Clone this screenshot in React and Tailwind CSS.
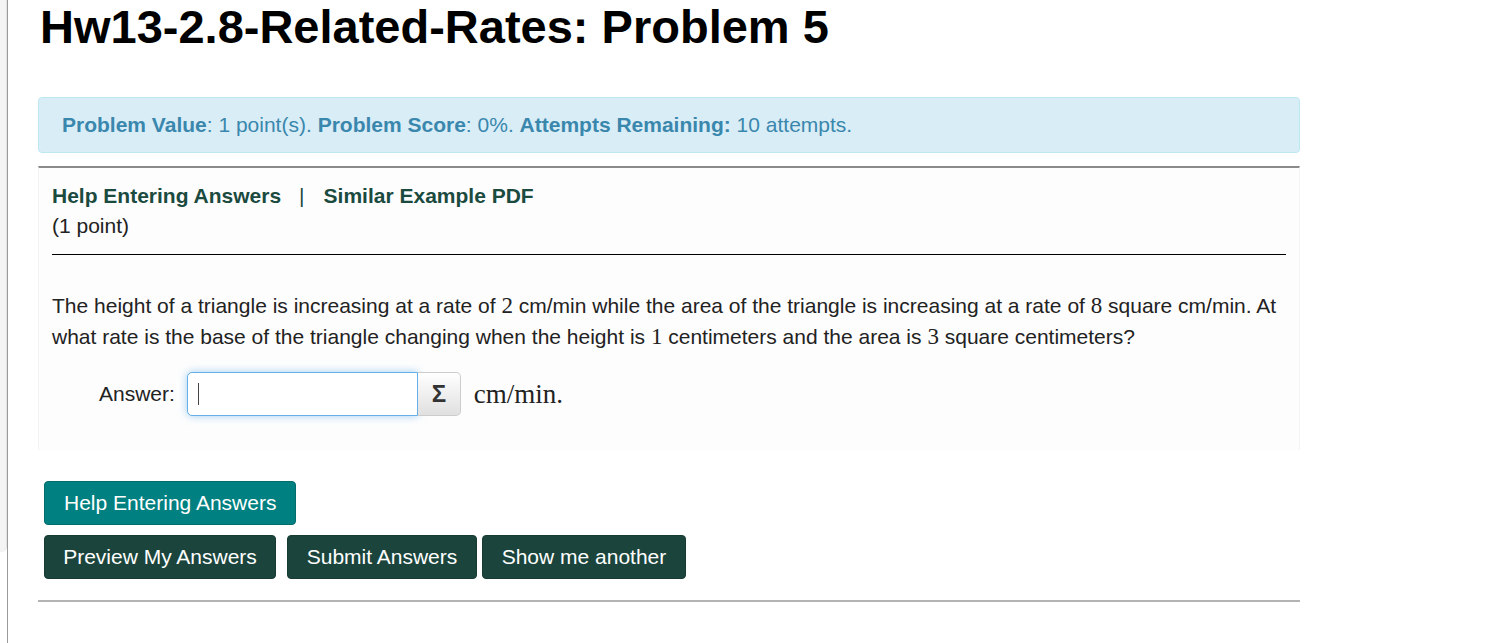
import React from "react";

const sans = { fontFamily: '"Liberation Sans", Arial, sans-serif' };
const serif = { fontFamily: '"Liberation Serif", "Times New Roman", serif' };

const M = ({ children }) => (
  <span className="text-[23px]" style={serif}>
    {children}
  </span>
);

const App = () => {
  return (
    <div className="flex min-h-[643px] w-[1503px] bg-white text-[#222]" style={sans}>
      {/* left sidebar edge */}
      <div className="w-[8px] shrink-0 border-r border-[#9a9a9a]">
        <div className="h-[552px] bg-[#f4f4f4] border-r border-[#e2e2e2] rounded-br-md"></div>
      </div>

      <div className="w-[1262px] ml-[30px]">
        <h1 className="ml-[2px] text-[47px] font-bold leading-[53px] text-black">
          Hw13-2.8-Related-Rates: Problem 5
        </h1>

        <div className="mt-[44px] h-[56px] flex items-center px-[23px] bg-[#d9edf7] border border-[#bce8f1] rounded-[4px] text-[21px] text-[#3a87ad]">
          <span>
            <b>Problem Value</b>: 1 point(s). <b>Problem Score</b>: 0%. <b>Attempts Remaining:</b> 10 attempts.
          </span>
        </div>

        <div className="mt-[13px] border-t-2 border-t-[#8a8a8a] border-x border-x-[#f3f3f3] bg-[#fdfdfd] h-[284px] px-[13px] pt-[13px]">
          <div className="text-[21px] leading-[30px]">
            <div className="font-bold text-[#1b4a3f]">
              <span>Help Entering Answers</span>
              <span className="ml-[18px] mr-[19px] font-normal">|</span>
              <span>Similar Example PDF</span>
            </div>
            <div>(1 point)</div>
          </div>
          <div className="mt-[13px] border-t border-black"></div>

          <p className="mt-[35px] text-[21px] leading-[31px]">
            The height of a triangle is increasing at a rate of <M>2</M> cm/min while the area of the triangle is
            increasing at a rate of <M>8</M> square cm/min. At what rate is the base of the triangle changing when the
            height is <M>1</M> centimeters and the area is <M>3</M> square centimeters?
          </p>

          <div className="mt-[20px] flex items-center text-[21px]">
            <span className="ml-[47px] mr-[12px]">Answer:</span>
            <div className="flex h-[44px]">
              <div className="w-[231px] h-full bg-white border border-[#66afe9] rounded-l-[5px] shadow-[0_0_8px_rgba(102,175,233,0.6)] flex items-center pl-[10px]">
                <span className="w-px h-[22px] bg-[#444]"></span>
              </div>
              <div className="w-[43px] h-full flex items-center justify-center border border-l-0 border-[#cccccc] rounded-r-[5px] bg-gradient-to-b from-[#ffffff] to-[#e0e0e0] text-[24px] font-bold text-[#333]">
                Σ
              </div>
            </div>
            <span className="ml-[13px] text-[27px]" style={serif}>
              cm/min.
            </span>
          </div>
        </div>

        <div className="mt-[31px] ml-[6px] text-[21px] text-white">
          <button className="h-[44px] px-[19px] rounded-[4px] bg-[#008080] border border-[#006c6c]">
            Help Entering Answers
          </button>
          <div className="mt-[10px] flex">
            <button className="h-[44px] w-[232px] rounded-[4px] bg-[#1b453c] border border-[#173a33]">
              Preview My Answers
            </button>
            <button className="ml-[11px] h-[44px] w-[190px] rounded-[4px] bg-[#1b453c] border border-[#173a33]">
              Submit Answers
            </button>
            <button className="ml-[5px] h-[44px] w-[204px] rounded-[4px] bg-[#1b453c] border border-[#173a33]">
              Show me another
            </button>
          </div>
        </div>

        <div className="mt-[21px] border-t-2 border-[#b3b3b3]"></div>
      </div>
    </div>
  );
};

export default App;
